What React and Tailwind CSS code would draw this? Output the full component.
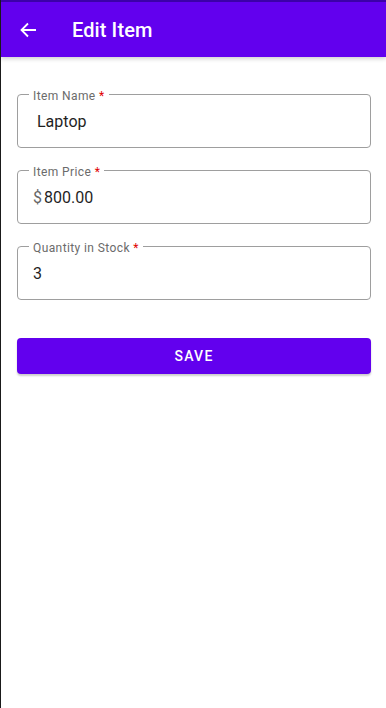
import React from 'react';

const Field = ({ label, children }) => (
  <div className="relative h-[54px] rounded-[4px] border border-[#9e9e9e] px-[15px] flex items-center">
    {/* floating label sits on the outline */}
    <span className="absolute left-[11px] top-[-5px] bg-white px-[4px] text-[12px] leading-[12px] tracking-[0.4px] text-[#6b6b6b]">
      {label} <span className="text-[#e00000]">*</span>
    </span>
    <div className="flex items-center mt-[1px] text-[16px] text-[#1f1f1f]">{children}</div>
  </div>
);

export default function App() {
  return (
    <div className="w-[386px] h-[708px] bg-white border-l border-[#1a1a1a] overflow-hidden" style={{ fontFamily: 'Roboto, "Noto Sans", sans-serif' }}>
      {/* App bar */}
      <header className="relative h-[57px] bg-[#6200ee] border-t-2 border-[#3c00a8] flex items-center shadow-[0_2px_4px_rgba(0,0,0,0.18)]">
        <svg className="ml-[19px] w-[16px] h-[16px]" viewBox="0 0 16 16" fill="none" stroke="white" strokeWidth="1.8">
          <path d="M16 8H1.5M8 1.5L1.5 8L8 14.5" />
        </svg>
        <h1 className="ml-[36px] text-[20px] font-medium text-white tracking-[0.1px] mt-[1px]">Edit Item</h1>
      </header>

      {/* Form */}
      <div className="pl-[16px] pr-[15px] pt-[37px] flex flex-col gap-[22px]">
        <Field label="Item Name">
          <span className="ml-[4px]">Laptop</span>
        </Field>
        <Field label="Item Price">
          <span className="text-[#666]">$</span>
          <span className="ml-[2px]">800.00</span>
        </Field>
        <Field label="Quantity in Stock">
          <span>3</span>
        </Field>
        <button className="mt-[16px] h-[36px] rounded-[4px] bg-[#6200ee] text-white text-[14px] font-medium tracking-[1.25px] shadow-[0_2px_2px_rgba(0,0,0,0.2)]">
          SAVE
        </button>
      </div>
    </div>
  );
}
